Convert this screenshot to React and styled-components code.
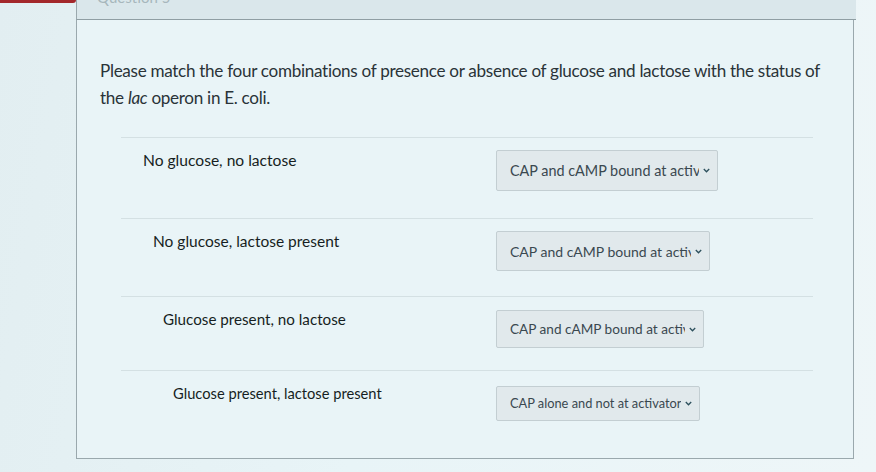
import React from "react";
import styled, { createGlobalStyle } from "styled-components";

const GlobalStyle = createGlobalStyle`
  html, body {
    margin: 0;
    padding: 0;
    background: #e4f0f3;
    font-family: Lato, "Open Sans", sans-serif;
  }
`;

const Page = styled.div`
  width: 876px;
  height: 472px;
  overflow: hidden;
  background: linear-gradient(100deg, #e2eef1 0%, #e8f4f7 45%, #eef6f8 100%);
`;

const TopBar = styled.div`
  display: flex;
  height: 20px;
`;

const TabSlot = styled.div`
  width: 76px;
  flex: none;
`;

const RedTab = styled.div`
  width: 76px;
  height: 3px;
  background: #a3282b;
  border-bottom-right-radius: 3px;
`;

const Header = styled.div`
  flex: 1;
  margin-right: 20px;
  display: flex;
  align-items: flex-end;
  overflow: hidden;
  background: #dae7eb;
  border-left: 1px solid #9aa8ad;
  border-bottom: 1px solid #8f9ea3;
`;

const HeaderTitle = styled.span`
  margin: 0 0 13px 20px;
  font-size: 15px;
  color: #a7b7bc;
`;

const Card = styled.div`
  margin: 0 22px 0 76px;
  height: 439px;
  box-sizing: border-box;
  padding: 37px 0 0 0;
  background: #e9f4f7;
  border-left: 1px solid #9aa8ad;
  border-right: 1px solid #9aa8ad;
  border-bottom: 1px solid #9aa8ad;
`;

const Question = styled.p`
  max-width: 742px;
  margin: 0 0 26px 23px;
  font-size: 17.1px;
  line-height: 27px;
  color: #2a3338;
  letter-spacing: -0.3px;
`;

const Rows = styled.div`
  margin: 0 40px 0 44px;
`;

const Row = styled.div`
  display: flex;
  align-items: flex-start;
  height: ${(p) => p.$height}px;
  box-sizing: border-box;
  padding: 12px 0 0 ${(p) => p.$indent}px;
  border-top: 1px solid #d4e0e3;
`;

const Label = styled.div`
  width: ${(p) => 375 - p.$indent}px;
  flex: none;
  font-size: ${(p) => p.$size}px;
  line-height: 20px;
  color: #161e22;
`;

const Select = styled.div`
  display: flex;
  align-items: center;
  width: ${(p) => (p.$width ? `${p.$width}px` : "auto")};
  height: ${(p) => p.$height}px;
  box-sizing: border-box;
  padding: 0 7px 0 13px;
  margin-top: ${(p) => (40 - p.$height) / 2}px;
  background: #e1e9ec;
  border: 1px solid #c3ced2;
  border-radius: 2px;
`;

const SelectText = styled.span`
  flex: 1;
  min-width: 0;
  overflow: hidden;
  white-space: nowrap;
  font-size: ${(p) => p.$size}px;
  color: #3a4850;
`;

const Chevron = styled.svg`
  margin-left: 4px;
  flex: none;
`;

const rows = [
  { label: "No glucose, no lactose", value: "CAP and cAMP bound at activator", indent: 22, rowHeight: 81, labelSize: 15.6, selectSize: 14.4, width: 222, height: 41 },
  { label: "No glucose, lactose present", value: "CAP and cAMP bound at activator", indent: 32, rowHeight: 78, labelSize: 15.5, selectSize: 14.0, width: 214, height: 40 },
  { label: "Glucose present, no lactose", value: "CAP and cAMP bound at activator", indent: 42, rowHeight: 74, labelSize: 15.2, selectSize: 13.6, width: 208, height: 38 },
  { label: "Glucose present, lactose present", value: "CAP alone and not at activator", indent: 52, rowHeight: 78, labelSize: 14.7, selectSize: 12.8, height: 35 },
];

const App = () => {
  return (
    <Page>
      <GlobalStyle />
      <TopBar>
        <TabSlot>
          <RedTab />
        </TabSlot>
        <Header>
          <HeaderTitle>Question 5</HeaderTitle>
        </Header>
      </TopBar>
      <Card>
        <Question>
          Please match the four combinations of presence or absence of glucose
          and lactose with the status of the <i>lac</i> operon in E. coli.
        </Question>
        <Rows>
          {rows.map((r) => (
            <Row key={r.label} $indent={r.indent} $height={r.rowHeight}>
              <Label $indent={r.indent} $size={r.labelSize}>
                {r.label}
              </Label>
              <Select $width={r.width} $height={r.height}>
                <SelectText $size={r.selectSize}>{r.value}</SelectText>
                <Chevron width="7" height="5" viewBox="0 0 7 5">
                  <path d="M0.8 1 L3.5 3.8 L6.2 1" fill="none" stroke="#2c4f5c" strokeWidth="1.3" />
                </Chevron>
              </Select>
            </Row>
          ))}
        </Rows>
      </Card>
    </Page>
  );
};

export default App;
